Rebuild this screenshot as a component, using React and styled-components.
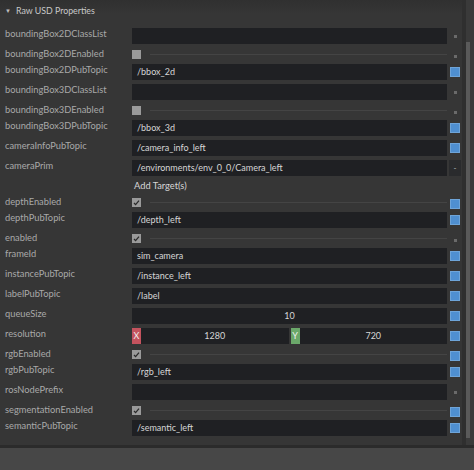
import styled, { createGlobalStyle } from 'styled-components';

const GlobalStyle = createGlobalStyle`
  html, body {
    margin: 0;
    padding: 0;
    background: #474747;
  }
  body {
    font-family: 'Lato', 'Open Sans', sans-serif;
  }
`;

const rows = [
  { name: 'boundingBox2DClassList', kind: 'text', value: '', mark: 'dot' },
  { name: 'boundingBox2DEnabled', kind: 'check', checked: false, mark: 'dot' },
  { name: 'boundingBox2DPubTopic', kind: 'text', value: '/bbox_2d', mark: 'blue' },
  { name: 'boundingBox3DClassList', kind: 'text', value: '', mark: 'dot' },
  { name: 'boundingBox3DEnabled', kind: 'check', checked: false, mark: 'dot' },
  { name: 'boundingBox3DPubTopic', kind: 'text', value: '/bbox_3d', mark: 'blue' },
  { name: 'cameraInfoPubTopic', kind: 'text', value: '/camera_info_left', mark: 'blue' },
  { name: 'cameraPrim', kind: 'target', value: '/environments/env_0_0/Camera_left', mark: 'dash' },
  { name: '', kind: 'add' },
  { name: 'depthEnabled', kind: 'check', checked: true, mark: 'blue' },
  { name: 'depthPubTopic', kind: 'text', value: '/depth_left', mark: 'blue' },
  { name: 'enabled', kind: 'check', checked: true, mark: 'dot' },
  { name: 'frameId', kind: 'text', value: 'sim_camera', mark: 'blue' },
  { name: 'instancePubTopic', kind: 'text', value: '/instance_left', mark: 'blue' },
  { name: 'labelPubTopic', kind: 'text', value: '/label', mark: 'blue' },
  { name: 'queueSize', kind: 'number', value: '10', mark: 'blue' },
  { name: 'resolution', kind: 'vec2', value: ['1280', '720'], mark: 'blue' },
  { name: 'rgbEnabled', kind: 'check', checked: true, mark: 'blue' },
  { name: 'rgbPubTopic', kind: 'text', value: '/rgb_left', mark: 'blue' },
  { name: 'rosNodePrefix', kind: 'text', value: '', mark: 'dot' },
  { name: 'segmentationEnabled', kind: 'check', checked: true, mark: 'blue' },
  { name: 'semanticPubTopic', kind: 'text', value: '/semantic_left', mark: 'blue' },
];

const CheckIcon = () => (
  <svg width="7" height="7" viewBox="0 0 7 7">
    <path d="M1 4 L2.6 5.6 L6 1.6" fill="none" stroke="#2a2a2a" strokeWidth="1.3" />
  </svg>
);

const Mark = ({ type }) => {
  if (type === 'blue') return <BlueMark />;
  if (type === 'dash') return <DashMark>-</DashMark>;
  return <DotMark />;
};

const Value = ({ row }) => {
  switch (row.kind) {
    case 'check':
      return (
        <CheckWrap>
          <CheckBox>{row.checked && <CheckIcon />}</CheckBox>
          <Rule />
        </CheckWrap>
      );
    case 'number':
      return <Field $center>{row.value}</Field>;
    case 'vec2':
      return (
        <VecWrap>
          <Field $center>
            <Axis $color="#c4535e">X</Axis>
            <AxisValue>{row.value[0]}</AxisValue>
          </Field>
          <Field $center>
            <Axis $color="#6ba86a">Y</Axis>
            <AxisValue>{row.value[1]}</AxisValue>
          </Field>
        </VecWrap>
      );
    case 'add':
      return <AddTarget>Add Target(s)</AddTarget>;
    default:
      return <Field>{row.value}</Field>;
  }
};

const App = () => {
  return (
    <>
      <GlobalStyle />
      <Window>
        <Panel>
          <Content>
            <Header>
              <Caret>▼</Caret>
              Raw USD Properties
            </Header>
            {rows.map((row, i) => (
              <Row key={i} $short={row.kind === 'check' || row.kind === 'add'}>
                <Label>{row.name}</Label>
                <Value row={row} />
                <MarkCell>{row.kind !== 'add' && <Mark type={row.mark} />}</MarkCell>
              </Row>
            ))}
          </Content>
          <ScrollTrack>
            <Thumb />
          </ScrollTrack>
        </Panel>
        <Footer />
      </Window>
    </>
  );
};

const Window = styled.div`
  width: 474px;
  height: 470px;
  display: flex;
  flex-direction: column;
  background: #474747;
  overflow: hidden;
`;

const Panel = styled.div`
  height: 445px;
  display: flex;
  background: linear-gradient(180deg, #303030 0px, #363636 14px, #363636 100%);
  border-bottom: 3px solid #2b2b2b;
`;

const Content = styled.div`
  flex: 1;
  display: flex;
  flex-direction: column;
`;

const Header = styled.div`
  height: 26px;
  box-sizing: border-box;
  padding: 4px 0 0 5px;
  display: flex;
  align-items: flex-start;
  color: #c9c9c9;
  font-size: 8.8px;
  line-height: 14px;
`;

const Caret = styled.span`
  font-size: 6px;
  width: 11px;
  color: #bdbdbd;
`;

const Row = styled.div`
  height: ${(props) => (props.$short ? '16px' : '20px')};
  display: flex;
  align-items: flex-start;
`;

const Label = styled.div`
  width: 132px;
  box-sizing: border-box;
  padding-left: 5px;
  line-height: 15px;
  font-size: 9.3px;
  color: #a9a9a9;
  white-space: nowrap;
`;

const Field = styled.div`
  flex: 1;
  height: 16px;
  margin-top: 2px;
  box-sizing: border-box;
  padding: 0 5px;
  background: #1f2023;
  color: #d6d6d6;
  font-size: 9px;
  line-height: 16px;
  white-space: nowrap;
  overflow: hidden;
  display: flex;
  align-items: center;
  justify-content: ${(props) => (props.$center ? 'center' : 'flex-start')};
  position: relative;
`;

const VecWrap = styled.div`
  flex: 1;
  display: flex;
  gap: 2px;
`;

const Axis = styled.span`
  position: absolute;
  left: 0;
  top: 0;
  width: 9px;
  height: 16px;
  background: ${(props) => props.$color};
  color: #f0f0f0;
  font-size: 9px;
  text-align: center;
  line-height: 16px;
`;

const AxisValue = styled.span`
  padding-left: 9px;
`;

const CheckWrap = styled.div`
  flex: 1;
  height: 16px;
  display: flex;
  align-items: center;
  gap: 9px;
`;

const CheckBox = styled.div`
  width: 9px;
  height: 9px;
  background: #9a9a9a;
  display: flex;
  align-items: center;
  justify-content: center;
`;

const Rule = styled.div`
  flex: 1;
  height: 1px;
  background: #444444;
`;

const AddTarget = styled.div`
  flex: 1;
  padding-left: 2px;
  line-height: 16px;
  font-size: 9.3px;
  color: #d6d6d6;
`;

const MarkCell = styled.div`
  width: 14px;
  height: 20px;
  display: flex;
  align-items: center;
  justify-content: center;
  padding-left: 1px;
`;

const BlueMark = styled.div`
  width: 8px;
  height: 8px;
  background: #4f8fd0;
  border: 1px solid #6ea4d8;
`;

const DotMark = styled.div`
  width: 3px;
  height: 3px;
  background: #6a6a6a;
`;

const DashMark = styled.div`
  width: 12px;
  height: 16px;
  margin-top: 2px;
  background: #2a2b2d;
  color: #bdbdbd;
  font-size: 8px;
  line-height: 16px;
  text-align: center;
  align-self: flex-start;
`;

const ScrollTrack = styled.div`
  width: 12px;
  display: flex;
  justify-content: flex-end;
  padding-top: 42px;
  box-sizing: border-box;
  background: linear-gradient(90deg, #2f2f2f 0 4px, #3a3a3a 4px);
`;

const Thumb = styled.div`
  width: 4px;
  height: 396px;
  margin-right: 4px;
  background: #5a5a5a;
`;

const Footer = styled.div`
  flex: 1;
  background: #474747;
`;

export default App;
